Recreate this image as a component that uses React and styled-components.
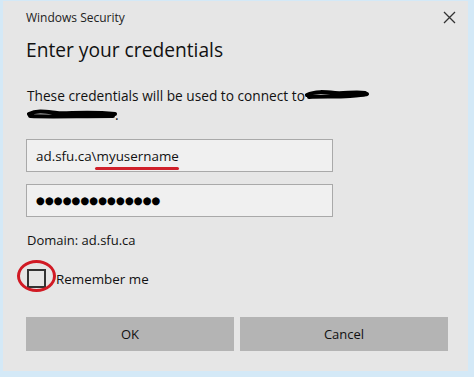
import React from "react";
import styled, { createGlobalStyle } from "styled-components";

const Global = createGlobalStyle`
  html, body { margin: 0; padding: 0; background: #d4e9f7; }
  body { font-family: "Open Sans", "Noto Sans", sans-serif; }
`;

const Frame = styled.div`
  width: 474px;
  height: 377px;
  box-sizing: border-box;
  padding: 1px 6px 6px 3px;
  background: #d4e9f7;
`;

const Dialog = styled.div`
  height: 100%;
  box-sizing: border-box;
  background: #e6e6e6;
  padding: 0 20px 0 23px;
  display: flex;
  flex-direction: column;
  color: #111;
`;

const TitleBar = styled.div`
  height: 32px;
  display: flex;
  align-items: center;
  justify-content: space-between;
  font-size: 12px;
  color: #222;
`;

const Close = styled.span`
  width: 13px;
  height: 13px;
  margin-right: -8px;
  display: flex;
`;

const Heading = styled.h1`
  margin: 2px 0 0 0;
  font-weight: 400;
  font-size: 19.2px;
  line-height: 30px;
  color: #111;
`;

const Desc = styled.p`
  margin: 21px 0 0 1px;
  font-size: 13.7px;
  line-height: 19px;
  width: 400px;
`;

const Redact = styled.span`
  position: relative;
  display: inline-block;
  width: ${(p) => p.$w}px;
  height: 12px;
  vertical-align: -1px;
`;

const Scribble = styled.svg`
  position: absolute;
  left: 0;
  top: -2px;
`;

const Field = styled.div`
  width: 307px;
  height: 33px;
  box-sizing: border-box;
  border: 1px solid #a9a9a9;
  background: #f0f0f0;
  display: flex;
  align-items: center;
  padding-left: 9px;
  font-size: 13.4px;
  margin-top: ${(p) => p.$mt}px;
`;

const Marked = styled.span`
  position: relative;
`;

const Underline = styled.span`
  position: absolute;
  left: -2px;
  right: 0;
  bottom: -5px;
  height: 3px;
  border-radius: 2px;
  background: #d0202a;
`;

const Dots = styled.span`
  font-size: 10.2px;
  letter-spacing: 0px;
  font-family: "DejaVu Sans", sans-serif;
  color: #000;
`;

const Domain = styled.div`
  margin-top: 14px;
  font-size: 13px;
  line-height: 18px;
  padding-left: 1px;
`;

const CheckRow = styled.label`
  position: relative;
  margin-top: 20px;
  display: flex;
  align-items: center;
  font-size: 13.4px;
  gap: 10px;
`;

const Box = styled.span`
  width: 15px;
  height: 15px;
  border: 2px solid #333;
  margin-left: 1px;
`;

const Ellipse = styled.span`
  position: absolute;
  left: -9px;
  top: -9px;
  width: 33px;
  height: 26px;
  border: 3px solid #d11a24;
  border-radius: 50%;
`;

const Buttons = styled.div`
  margin-top: 29px;
  display: grid;
  grid-template-columns: 1fr 1fr;
  gap: 6px;
  width: 422px;
`;

const Button = styled.button`
  height: 34px;
  border: none;
  background: #b4b4b4;
  font-family: inherit;
  font-size: 13px;
  color: #111;
`;

export default function App() {
  return (
    <>
      <Global />
      <Frame>
        <Dialog>
          <TitleBar>
            <span>Windows Security</span>
            <Close>
              <svg width="13" height="13" viewBox="0 0 13 13">
                <path d="M1 1 L12 12 M12 1 L1 12" stroke="#333" strokeWidth="1.3" />
              </svg>
            </Close>
          </TitleBar>
          <Heading>Enter your credentials</Heading>
          <Desc>
            These credentials will be used to connect to
            <Redact $w={62}>
              <Scribble width="64" height="14" viewBox="0 0 64 14">
                <path d="M2 7 C10 3, 20 4, 30 5 S50 3, 60 5 M4 9 C15 8, 30 9, 45 8 S58 7, 62 6" stroke="#000" strokeWidth="4" fill="none" strokeLinecap="round" />
              </Scribble>
            </Redact>
            <br />
            <Redact $w={88}>
              <Scribble width="90" height="14" viewBox="0 0 90 14">
                <path d="M2 7 C10 3, 20 5, 30 6 S60 4, 88 7 M3 9 C20 10, 50 9, 86 9" stroke="#000" strokeWidth="4" fill="none" strokeLinecap="round" />
              </Scribble>
            </Redact>
            .
          </Desc>
          <Field $mt={15}>
            ad.sfu.ca\
            <Marked>
              myusername
              <Underline />
            </Marked>
          </Field>
          <Field $mt={12}>
            <Dots>●●●●●●●●●●●●●●</Dots>
          </Field>
          <Domain>Domain: ad.sfu.ca</Domain>
          <CheckRow>
            <Box />
            <Ellipse />
            Remember me
          </CheckRow>
          <Buttons>
            <Button>OK</Button>
            <Button>Cancel</Button>
          </Buttons>
        </Dialog>
      </Frame>
    </>
  );
}
